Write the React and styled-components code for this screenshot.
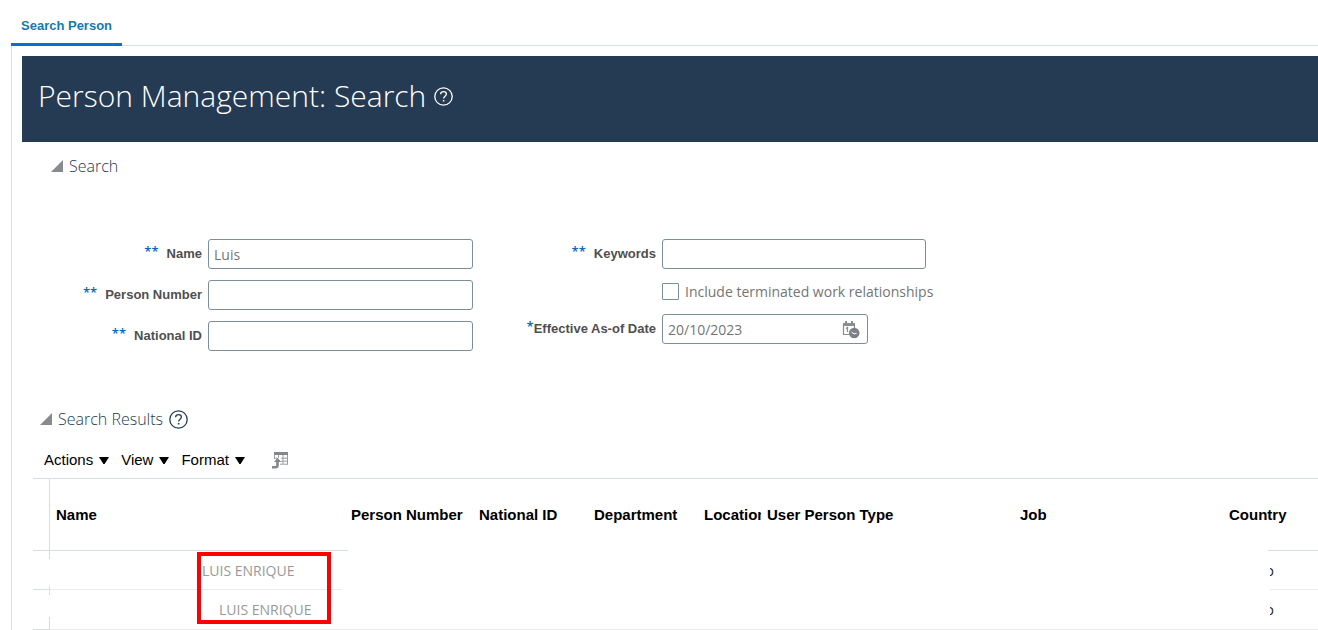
import React, { useState } from "react";
import styled, { createGlobalStyle } from "styled-components";

const light = '"Open Sans", "Noto Sans", sans-serif';
const sans = '"Liberation Sans", Arial, sans-serif';
const line = "#d6dfe6";

const GlobalStyle = createGlobalStyle`
  *, *::before, *::after { box-sizing: border-box; }
  body { margin: 0; background: #fff; font-family: ${sans}; overflow-x: hidden; }
  button { font: inherit; color: inherit; background: none; border: 0; padding: 0; cursor: pointer; }
`;

const Page = styled.div`
  padding-left: 11px;
`;

const Tabs = styled.nav`
  display: flex;
  height: 45px;
`;

const Tab = styled.a`
  display: block;
  height: 46px;
  padding: 16px 10px 0;
  border-bottom: 3px solid #0572ce;
  color: #1778ab;
  font-size: 13px;
  font-weight: 700;
  line-height: 20px;
  text-decoration: none;
  z-index: 1;
`;

const Panel = styled.main`
  border-top: 1px solid ${line};
  border-left: 1px solid ${line};
  padding: 10px 0 0 10px;
`;

const Banner = styled.header`
  display: flex;
  align-items: center;
  gap: 8px;
  height: 86px;
  padding: 0 16px 6px;
  background: #253a53;
  color: #fff;
`;

const Title = styled.h1`
  margin: 0;
  font-family: ${light};
  font-size: 30px;
  font-weight: 300;
  line-height: 40px;
`;

const HelpButton = styled.button`
  display: flex;
`;

const SectionHead = styled.div`
  display: flex;
  align-items: center;
  gap: 6px;
  height: 24px;
  padding-left: ${(p) => p.$indent}px;
  color: #253a53;
`;

const SectionTitle = styled.h2`
  margin: 0;
  font-family: ${light};
  font-size: 16px;
  font-weight: 300;
  line-height: 24px;
`;

const Disclosure = styled.button`
  display: flex;
`;

const SearchSection = styled.section`
  padding-top: 12px;
`;

const Form = styled.form`
  display: flex;
  padding-top: 61px;
`;

const Fields = styled.div`
  display: flex;
  flex-direction: column;
  gap: ${(p) => p.$gap}px;
`;

const Row = styled.div`
  display: flex;
  align-items: center;
  gap: 6px;
  height: ${(p) => p.$height || 30}px;
`;

const Label = styled.label`
  display: flex;
  justify-content: flex-end;
  gap: ${(p) => p.$gap}px;
  width: ${(p) => p.$width}px;
  color: #4f4f4f;
  font-size: 13px;
  font-weight: 700;
  line-height: 16px;
`;

const Mark = styled.span`
  color: #0b68b8;
  font-family: ${light};
  font-size: 13px;
  font-weight: 600;
  line-height: 10px;
`;

const TextInput = styled.input`
  width: ${(p) => p.$width || 265}px;
  height: 30px;
  padding: 0 5px;
  border: 1px solid #7b8f9b;
  border-radius: 3px;
  background: #fff;
  color: #757575;
  font-family: ${light};
  font-size: 14px;
  outline: none;
`;

const DateField = styled.div`
  display: flex;
  align-items: center;
  justify-content: space-between;
  width: 206px;
  height: 30px;
  padding-right: 7px;
  border: 1px solid #7b8f9b;
  border-radius: 3px;

  ${TextInput} {
    border: 0;
    height: 28px;
    background: transparent;
  }
`;

const DateButton = styled.button`
  display: flex;
  padding-top: 2px;
`;

const CheckLabel = styled.label`
  display: flex;
  align-items: center;
  gap: 6px;
  padding-left: 189px;
  color: #757575;
  font-family: ${light};
  font-size: 14px;
  line-height: 19px;
`;

const CheckBox = styled.input`
  appearance: none;
  width: 17px;
  height: 17px;
  margin: 0;
  border: 1px solid #7b8f9b;
  border-radius: 1px;
  &:checked { background: #0572ce; }
`;

const Results = styled.section`
  padding: 56px 0 0 11px;
`;

const Toolbar = styled.div`
  display: flex;
  align-items: center;
  gap: 12px;
  height: 47px;
  padding: 10px 0 0 11px;
`;

const MenuButton = styled.button`
  display: flex;
  align-items: center;
  gap: 6px;
  font-size: 15px;
  line-height: 20px;
`;

const DetachButton = styled.button`
  display: flex;
  margin-left: 15px;
`;

const TableFrame = styled.div`
  position: relative;
  overflow: hidden;
`;

const Table = styled.table`
  width: 100%;
  table-layout: fixed;
  border-collapse: separate;
  border-spacing: 0;
  border-top: 1px solid ${line};
`;

const HeadCell = styled.th`
  height: 72px;
  padding: 0 0 0 6px;
  border-bottom: 1px solid ${line};
  color: #000;
  font-size: 15px;
  font-weight: 700;
  text-align: left;
  white-space: nowrap;
  overflow: hidden;
`;

const Cell = styled.td`
  height: ${(p) => p.$height}px;
  padding: 0 0 0 ${(p) => p.$indent || 6}px;
  border-bottom: 1px solid #ebebeb;
  color: #999;
  font-family: ${light};
  font-size: 14px;
  white-space: nowrap;
`;

const Gutter = styled.td`
  border-right: 1px solid ${line};
  border-bottom: 1px solid ${line};
`;

const Clipped = styled.span`
  display: flex;
  justify-content: flex-end;
  width: 4px;
  margin-left: 41px;
  overflow: hidden;
  color: #222;
`;

const Redaction = styled.div`
  position: absolute;
  top: ${(p) => p.$top}px;
  left: ${(p) => p.$left}px;
  right: ${(p) => (p.$right === undefined ? "auto" : `${p.$right}px`)};
  width: ${(p) => (p.$width ? `${p.$width}px` : "auto")};
  height: ${(p) => p.$height}px;
  background: #fff;
`;

const Highlight = styled.div`
  position: absolute;
  top: 74px;
  left: 164px;
  width: 134px;
  height: 72px;
  border: 4px solid #f00;
`;

const HelpIcon = ({ size }) => (
  <svg width={size} height={size} viewBox="0 0 19 19" fill="none" stroke="currentColor" strokeWidth="1.3">
    <circle cx="9.5" cy="9.5" r="8.7" />
    <path d="M6.6 7.2C6.6 5.5 7.8 4.6 9.5 4.6s2.9.9 2.9 2.4c0 2-2.8 2.3-2.8 4.5" />
    <path d="M9.6 13v1.5" strokeWidth="1.6" />
  </svg>
);

const Triangle = () => (
  <svg width="12" height="12" viewBox="0 0 12 12">
    <path d="M12 0v12H0z" fill="#878b8e" />
  </svg>
);

const Caret = () => (
  <svg width="10" height="9" viewBox="0 0 10 9">
    <path d="M0 2h10L5.6 9H4.4z" fill="#000" />
  </svg>
);

const CalendarIcon = () => (
  <svg width="18" height="18" viewBox="0 0 18 18">
    <path d="M1 2h12v3H1zM3 0h2v3H3zM9 0h2v3H9z" fill="#8a8e91" />
    <path d="M1.5 3v10.5H7M12.5 4v3" fill="none" stroke="#8a8e91" strokeWidth="1.2" />
    <path d="M4 7.5l1.5-1V11" fill="none" stroke="#8a8e91" strokeWidth="1.3" />
    <circle cx="12.2" cy="12" r="5.3" fill="#7c8084" />
    <path d="M9.4 11l2.6 1.8 2.6-.4" fill="none" stroke="#fff" strokeWidth="1" />
  </svg>
);

const DetachIcon = () => (
  <svg width="17" height="18" viewBox="0 0 17 18">
    <path d="M2 1h14v3H2z" fill="#84888b" />
    <path d="M2.5 4v4M6.5 4v3M11 4v9M15.5 4v9.5M2 7.2h3M9 7.2h7M9 10.2h7M8 13.2h8" fill="none" stroke="#9a9da0" />
    <path d="M0 16.2h3.5c1.4 0 2-.6 2-2V10" fill="none" stroke="#84888b" strokeWidth="2.6" />
    <path d="M2 11l3.6-4.2L9.2 11z" fill="#84888b" />
  </svg>
);

const columns = [
  ["Name", 295],
  ["Person Number", 128],
  ["National ID", 115],
  ["Department", 110],
  ["Location", 63],
  ["User Person Type", 253],
  ["Job", 209],
  ["Country", null],
];

const people = [
  { name: "LUIS ENRIQUE", indent: 152, height: 39 },
  { name: "LUIS ENRIQUE", indent: 169, height: 40 },
];

const Field = ({ id, label, mark = "**", width, children }) => (
  <Row>
    <Label htmlFor={id} $gap={mark === "**" ? 8 : 0} $width={width}>
      <Mark>{mark}</Mark>
      {label}
    </Label>
    {children}
  </Row>
);

export default function App() {
  const [name, setName] = useState("Luis");
  const [date, setDate] = useState("20/10/2023");

  return (
    <Page>
      <GlobalStyle />
      <Tabs>
        <Tab href="#search">Search Person</Tab>
      </Tabs>
      <Panel>
        <Banner>
          <Title>Person Management: Search</Title>
          <HelpButton aria-label="Help"><HelpIcon size={19} /></HelpButton>
        </Banner>

        <SearchSection id="search">
          <SectionHead $indent={29}>
            <Disclosure aria-label="Collapse search"><Triangle /></Disclosure>
            <SectionTitle>Search</SectionTitle>
          </SectionHead>
          <Form onSubmit={(e) => e.preventDefault()}>
            <Fields $gap={11}>
              <Field id="name" label="Name" width={180}>
                <TextInput id="name" value={name} onChange={(e) => setName(e.target.value)} />
              </Field>
              <Field id="number" label="Person Number" width={180}>
                <TextInput id="number" />
              </Field>
              <Field id="national" label="National ID" width={180}>
                <TextInput id="national" />
              </Field>
            </Fields>
            <Fields $gap={13}>
              <Field id="keywords" label="Keywords" width={183}>
                <TextInput id="keywords" $width={264} />
              </Field>
              <Row $height={19}>
                <CheckLabel>
                  <CheckBox type="checkbox" />
                  Include terminated work relationships
                </CheckLabel>
              </Row>
              <Field id="date" label="Effective As-of Date" mark="*" width={183}>
                <DateField>
                  <TextInput id="date" $width={150} value={date} onChange={(e) => setDate(e.target.value)} />
                  <DateButton type="button" aria-label="Select date"><CalendarIcon /></DateButton>
                </DateField>
              </Field>
            </Fields>
          </Form>
        </SearchSection>

        <Results>
          <SectionHead $indent={7}>
            <Disclosure aria-label="Collapse results"><Triangle /></Disclosure>
            <SectionTitle>Search Results</SectionTitle>
            <HelpButton aria-label="Help"><HelpIcon size={19} /></HelpButton>
          </SectionHead>
          <Toolbar>
            {["Actions", "View", "Format"].map((item) => (
              <MenuButton key={item}>
                {item}
                <Caret />
              </MenuButton>
            ))}
            <DetachButton aria-label="Detach"><DetachIcon /></DetachButton>
          </Toolbar>
          <TableFrame>
            <Table>
              <colgroup>
                <col width="17" />
                {columns.map(([label, width]) => (
                  <col key={label} width={width || undefined} />
                ))}
              </colgroup>
              <thead>
                <tr>
                  <Gutter />
                  {columns.map(([label]) => (
                    <HeadCell key={label}>{label}</HeadCell>
                  ))}
                </tr>
              </thead>
              <tbody>
                {people.map((person, i) => (
                  <tr key={i}>
                    <Gutter />
                    <Cell $indent={person.indent} $height={person.height}>{person.name}</Cell>
                    {columns.slice(1, -1).map(([label]) => (
                      <Cell key={label} />
                    ))}
                    <Cell><Clipped>o</Clipped></Cell>
                  </tr>
                ))}
              </tbody>
            </Table>
            <Redaction $top={70} $left={315} $right={50} $height={50} />
            <Redaction $top={108} $left={309} $right={48} $height={40} />
            <Redaction $top={81} $left={16} $width={140} $height={27} />
            <Redaction $top={117} $left={16} $width={140} $height={22} />
            <Highlight />
          </TableFrame>
        </Results>
      </Panel>
    </Page>
  );
}
